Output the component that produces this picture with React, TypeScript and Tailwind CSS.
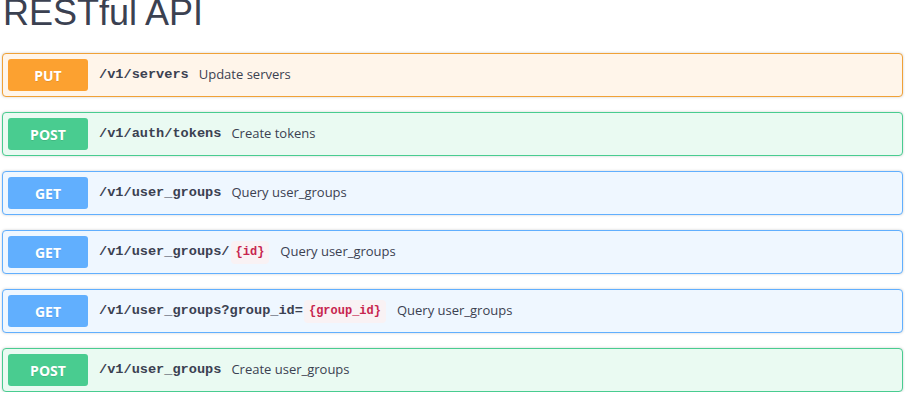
const ops = [
  { method: "PUT", path: ["/v1/servers"], desc: "Update servers" },
  { method: "POST", path: ["/v1/auth/tokens"], desc: "Create tokens" },
  { method: "GET", path: ["/v1/user_groups"], desc: "Query user_groups" },
  { method: "GET", path: ["/v1/user_groups/", "{id}"], desc: "Query user_groups" },
  { method: "GET", path: ["/v1/user_groups?group_id=", "{group_id}"], desc: "Query user_groups" },
  { method: "POST", path: ["/v1/user_groups"], desc: "Create user_groups" },
];

const styles: Record<string, { block: string; badge: string }> = {
  PUT: { block: "bg-[#fff5ea] border-[#f0a137]", badge: "bg-[#fca130]" },
  POST: { block: "bg-[#eafaf2] border-[#49cc90]", badge: "bg-[#49cc90]" },
  GET: { block: "bg-[#eff7ff] border-[#61affe]", badge: "bg-[#61affe]" },
};

const App = () => {
  return (
    <div className="px-[2px] bg-white text-[#3b4151]">
      <h1 className="text-[36px] leading-[36px] -mt-[5px] pl-[1px] mb-[22px] font-normal font-['Liberation_Sans',Arial,sans-serif] text-[#3b4151]">
        RESTful API
      </h1>
      <div className="flex flex-col gap-[15px]">
        {ops.map((op, i) => {
          const s = styles[op.method];
          return (
            <div
              key={i}
              className={`flex items-center h-[44px] border rounded-[4px] px-[5px] shadow-[0_0_3px_rgba(0,0,0,0.19)] ${s.block}`}
            >
              <span
                className={`w-[80px] h-[32px] shrink-0 rounded-[3px] flex items-center justify-center text-white text-[14px] font-bold font-['Open_Sans',sans-serif] [text-shadow:0_1px_0_rgba(0,0,0,0.1)] ${s.badge}`}
              >
                {op.method}
              </span>
              <span className="ml-[11px] flex items-center font-['Liberation_Mono',monospace] font-bold text-[13.6px] text-[#3b4151]">
                {op.path[0]}
                {op.path[1] && (
                  <code className="ml-[1px] h-[23px] flex items-center px-[5px] rounded-[4px] bg-[#f9f2f4] text-[#c7254e] text-[12px] font-['Liberation_Mono',monospace] font-bold">
                    {op.path[1]}
                  </code>
                )}
              </span>
              <span className={`${op.path[1] ? "ml-[11px]" : "ml-[10px]"} text-[13px] font-['Open_Sans',sans-serif] text-[#3b4151]`}>
                {op.desc}
              </span>
            </div>
          );
        })}
      </div>
    </div>
  );
};

export default App;
